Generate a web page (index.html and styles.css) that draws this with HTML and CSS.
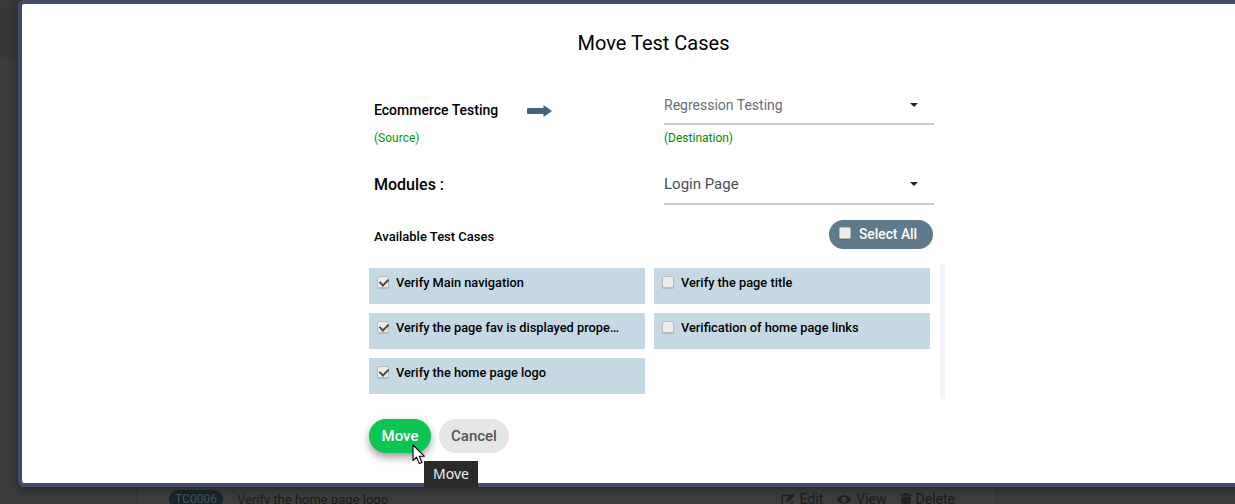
FILE: index.html
```html
<!DOCTYPE html>
<html lang="en">
<head>
<meta charset="utf-8">
<title>Move Test Cases</title>
<link rel="stylesheet" href="styles.css">
</head>
<body>
<div class="page">
  <div class="page-top"></div>
  <div class="page-main">
    <div class="page-card">
      <div class="bg-row">
        <span class="bg-badge">TC0006</span>
        <span class="bg-title">Verify the home page logo</span>
        <span class="bg-actions">
          <span class="bg-action"><svg class="bg-icon" viewBox="0 0 16 16"><path d="M1 3h9v1.500H2.500v9h9V9H13v6H1zM6 8l6.500-6.500 2.500 2.500L8.500 10.500H6z" fill="#202020"/></svg>Edit</span>
          <span class="bg-action"><svg class="bg-icon" viewBox="0 0 16 16"><path fill-rule="evenodd" d="M0 8c4-6 12-6 16 0-4 6-12 6-16 0zm8-3a3 3 0 1 0 0 6 3 3 0 0 0 0-6z" fill="#202020"/></svg>View</span>
          <span class="bg-action"><svg class="bg-icon bg-icon-small" viewBox="0 0 12 16"><path d="M4 1h4v1.500h4V4H0V2.500h4zM1 5h10v10H1z" fill="#202020"/></svg>Delete</span>
        </span>
      </div>
    </div>
  </div>
</div>

<div class="modal">
  <h1 class="modal-title">Move Test Cases</h1>
  <div class="content">
    <div class="project-row">
      <div class="source">
        <div class="source-line">
          <span class="source-name">Ecommerce Testing</span>
          <svg class="arrow" viewBox="0 0 25 12"><path d="M2 3h14.500V0L25 6l-8.500 6V9H2a3 3 0 0 1 0-6z" fill="#44637a"/></svg>
        </div>
        <div class="hint hint-source">(Source)</div>
      </div>
      <div class="destination">
        <div class="select select-destination">
          <span>Regression Testing</span><i class="caret"></i>
        </div>
        <div class="hint hint-destination">(Destination)</div>
      </div>
    </div>

    <div class="modules-row">
      <div class="modules-label">Modules :</div>
      <div class="select select-module">
        <span>Login Page</span><i class="caret"></i>
      </div>
    </div>

    <div class="available-row">
      <div class="available-label">Available Test Cases</div>
      <label class="select-all"><input class="box select-all-box" type="checkbox">Select All</label>
    </div>

    <div class="list-wrap">
      <div class="case-grid">
        <label class="case"><input class="box" type="checkbox" checked><span class="case-text">Verify Main navigation</span></label>
        <label class="case"><input class="box" type="checkbox"><span class="case-text">Verify the page title</span></label>
        <label class="case"><input class="box" type="checkbox" checked><span class="case-text">Verify the page fav is displayed properly on the browser</span></label>
        <label class="case"><input class="box" type="checkbox"><span class="case-text">Verification of home page links</span></label>
        <label class="case"><input class="box" type="checkbox" checked><span class="case-text">Verify the home page logo</span></label>
      </div>
    </div>

    <div class="actions">
      <button class="btn btn-move" type="button">Move</button>
      <button class="btn btn-cancel" type="button">Cancel</button>
    </div>
  </div>
</div>

<div class="tooltip">Move</div>
<svg class="cursor" viewBox="0 0 14 21"><path d="M1 1v15.500l3.600-3.400 2.700 6.500 2.700-1.100-2.700-6.300h5z" fill="#fff" stroke="#000" stroke-width="1.100" stroke-linejoin="round"/></svg>
</body>
</html>
```
FILE: styles.css
```css
* { box-sizing: border-box; }
html, body { margin: 0; height: 100%; }
body {
  position: relative;
  width: 1235px;
  height: 504px;
  overflow: hidden;
  font-family: Roboto, "Liberation Sans", sans-serif;
  background: #3c3c3c;
}

/* Dimmed page behind the modal */
.page { height: 504px; display: flex; flex-direction: column; }
.page-top { height: 58px; background: #383838; flex: none; }
.page-main { flex: 1; padding-left: 137px; padding-right: 238px; }
.page-card {
  height: 100%;
  border-left: 1px solid #333;
  border-right: 1px solid #333;
  background: #3e3e3e;
  display: flex;
  flex-direction: column;
  justify-content: flex-end;
}
.bg-row {
  display: flex;
  align-items: center;
  height: 18px;
  margin-bottom: -4px;
  padding-left: 31px;
  color: #1c1c1c;
  font-size: 14px;
}
.bg-badge {
  background: #17252c;
  color: #4e5456;
  font-size: 12px;
  border-radius: 10px;
  width: 54px;
  height: 18px;
  line-height: 18px;
  text-align: center;
  margin-right: 14px;
}
.bg-title { font-size: 13px; }
.bg-actions { display: flex; margin-left: auto; margin-right: 41px; gap: 13px; }
.bg-action { display: inline-flex; align-items: center; gap: 4px; }
.bg-icon { width: 16px; height: 15px; flex: none; }
.bg-icon-small { width: 12px; }

/* Modal */
.modal {
  position: absolute;
  left: 18px;
  top: 0;
  width: 1271px;
  height: 487px;
  background: #fff;
  border: 4px solid #434a68;
  border-radius: 6px;
  box-shadow: 0 3px 12px rgba(0, 0, 0, .35);
}
.modal-title {
  margin: 0;
  padding-top: 24px;
  height: 84px;
  font-size: 20px;
  line-height: 30px;
  font-weight: 400;
  color: #000;
  text-align: center;
}
.content { width: 576px; margin-left: 347px; }

.project-row { display: flex; height: 56px; padding-left: 5px; }
.source { width: 290px; padding-top: 11px; }
.source-line { display: flex; align-items: center; height: 22px; }
.source-name { font-size: 14px; font-weight: 500; color: #000; width: 153px; }
.arrow { width: 25px; height: 12px; margin-top: 1px; }
.hint { font-size: 12px; line-height: 14px; }
.hint-source { margin-top: 10px; color: #0a9a0a; }
.hint-destination { margin-top: 6px; color: #008a00; }

.destination { width: 270px; }
.select {
  display: flex;
  align-items: center;
  justify-content: space-between;
  width: 270px;
  border-bottom: 2px solid #c2d0dc;
  padding-right: 16px;
}
.select-destination { height: 37px; color: #6a6f76; padding-bottom: 1px; font-size: 14px; }
.select-module { height: 40px; color: #495057; font-size: 15px; }
.caret {
  width: 0;
  height: 0;
  border-left: 4px solid transparent;
  border-right: 4px solid transparent;
  border-top: 4px solid #222;
}

.modules-row { display: flex; align-items: flex-end; height: 61px; padding-left: 5px; }
.modules-label { width: 290px; font-size: 16px; font-weight: 500; color: #000; line-height: 20px; padding-bottom: 10px; }

.available-row {
  display: flex;
  align-items: flex-start;
  justify-content: space-between;
  height: 30px;
  margin-top: 15px;
  padding-left: 5px;
  padding-right: 12px;
}
.available-label { font-size: 13px; line-height: 15px; font-weight: 500; color: #000; padding-top: 9px; }
.select-all {
  display: flex;
  align-items: center;
  width: 104px;
  height: 29px;
  padding: 0 0 1px 10px;
  background: #5e7a8b;
  border-radius: 15px;
  color: #fff;
  font-size: 13.800px;
  font-weight: 500;
}
.box {
  appearance: none;
  position: relative;
  flex: none;
  width: 12px;
  height: 12px;
  margin: 0;
  background: #ececec;
  border: 1px solid #bcbcbc;
  border-radius: 2px;
  box-shadow: 0 1px 1px rgba(0, 0, 0, .15);
}
.box:checked::after {
  content: "";
  position: absolute;
  left: 3px;
  top: 0;
  width: 4px;
  height: 7px;
  border: solid #4a4a4a;
  border-width: 0 2px 2px 0;
  transform: rotate(45deg);
}
.select-all .select-all-box { margin: 0 8px 3px 0; }

.list-wrap {
  margin-top: 14px;
  height: 135px;
  border-right: 5px solid #f4f4f8;
  padding-top: 4px;
}
.case-grid {
  display: grid;
  grid-template-columns: 276px 276px;
  gap: 9px;
}
.case {
  display: flex;
  align-items: flex-start;
  height: 36px;
  background: #c5d9e5;
  padding: 8px 8px 0;
  min-width: 0;
}
.case .box { margin: 0 7px 0 0; }
.case-text {
  font-size: 12.800px;
  line-height: 14px;
  font-weight: 500;
  color: #000;
  white-space: nowrap;
  overflow: hidden;
  text-overflow: ellipsis;
  width: 225px;
}

.actions { display: flex; gap: 8px; margin-top: 20px; }
.btn {
  height: 34px;
  border: 0;
  border-radius: 17px;
  font-family: inherit;
  font-size: 15px;
  font-weight: 500;
  padding: 0;
}
.btn-move {
  width: 62px;
  color: #fff;
  background: #0cc552;
  box-shadow: 0 4px 9px rgba(0, 0, 0, .4);
}
.btn-cancel { width: 70px; color: #555; background: #e6e6e6; }

/* Overlays */
.tooltip {
  position: absolute;
  left: 424px;
  top: 461px;
  width: 54px;
  height: 26px;
  background: #2a2a2a;
  color: #f0f0f0;
  font-family: "Noto Sans", sans-serif;
  font-size: 14px;
  line-height: 26px;
  text-align: center;
}
.cursor { position: absolute; left: 412px; top: 444px; width: 14px; height: 21px; }
```
